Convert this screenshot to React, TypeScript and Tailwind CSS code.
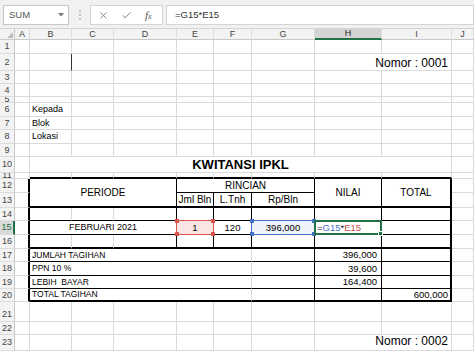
import type { ReactNode } from "react";
import { clsx } from "clsx";
import { X, Check } from "lucide-react";

// gridline + border classes
const GR = "border-r border-r-[#dadada]";
const GB = "border-b border-b-[#dadada]";
const KR = "border-r border-r-black";
const KR2 = "border-r-2 border-r-black";
const KB = "border-b border-b-black";
const KB2 = "border-b-2 border-b-black";

interface CellSpec {
  cls?: string;
  node?: ReactNode;
}

const blank = (extra?: string): CellSpec => ({ cls: clsx(GR, GB, extra) });
const blanks = (n: number): CellSpec[] => Array.from({ length: n }, () => blank());

const COLS = ["A", "B", "C", "D", "E", "F", "G", "H", "I", "J"];

function Corners({ cls }: { cls: string }) {
  return (
    <>
      <span className={clsx("absolute -left-[2px] -top-[2px] h-[4px] w-[4px]", cls)} />
      <span className={clsx("absolute -right-[2px] -top-[2px] h-[4px] w-[4px]", cls)} />
      <span className={clsx("absolute -left-[2px] -bottom-[2px] h-[4px] w-[4px]", cls)} />
      <span className={clsx("absolute -right-[2px] -bottom-[2px] h-[4px] w-[4px]", cls)} />
    </>
  );
}

const label = (text: string): CellSpec => ({
  cls: clsx(GR, GB, "items-center pl-[2px] text-[9px] whitespace-nowrap"),
  node: text,
});

const summary = (text: string, value: string, total: string, last: boolean): CellSpec[] => {
  const bb = last ? KB2 : KB;
  return [
    { cls: clsx(KR2, GB) },
    {
      cls: clsx("col-span-5 items-center pl-[2px] text-[8.5px] whitespace-pre", GR, bb),
      node: text,
    },
    { cls: clsx(KR, bb) },
    { cls: clsx(KR, bb, "items-center justify-end pr-[4px] text-[9.5px]"), node: value },
    { cls: clsx(KR2, bb, "items-center justify-end pr-[2px] text-[9.5px]"), node: total },
    blank(),
  ];
};

const ROWS: CellSpec[][] = [
  // 1
  blanks(10),
  // 2
  [
    blank(),
    { cls: clsx("border-r border-r-[#333]", GB) },
    ...blanks(5),
    {
      cls: clsx("col-span-2 items-end justify-end pr-[3px] pb-[1px] text-[12px] whitespace-nowrap", GR, GB),
      node: "Nomor : 0001",
    },
    blank(),
  ],
  // 3, 4, 5
  blanks(10),
  blanks(10),
  blanks(10),
  // 6, 7, 8
  [blank(), label("Kepada"), ...blanks(8)],
  [blank(), label("Blok"), ...blanks(8)],
  [blank(), label("Lokasi"), ...blanks(8)],
  // 9
  blanks(10),
  // 10
  [
    blank(),
    {
      cls: clsx("col-span-8 items-center justify-center font-bold text-[13px]", GR, GB),
      node: "KWITANSI IPKL",
    },
    blank(),
  ],
  // 11
  [blank(), ...Array.from({ length: 8 }, () => ({ cls: clsx(GR, KB2) })), blank()],
  // 12
  [
    { cls: clsx(KR2, GB) },
    {
      cls: clsx("col-span-3 row-span-2 items-center justify-center text-[10px]", KR, KB2),
      node: "PERIODE",
    },
    {
      cls: clsx("col-span-3 items-center justify-center text-[10px]", KR, KB),
      node: "RINCIAN",
    },
    { cls: clsx("row-span-2 items-center justify-center text-[10px]", KR, KB2), node: "NILAI" },
    { cls: clsx("row-span-2 items-center justify-center text-[10px]", KR2, KB2), node: "TOTAL" },
    blank(),
  ],
  // 13
  [
    { cls: clsx(KR2, GB) },
    { cls: clsx("items-center justify-center text-[10px] whitespace-nowrap", KR, KB2), node: "Jml Bln" },
    { cls: clsx("items-center justify-center text-[10px] whitespace-nowrap", KR, KB2), node: "L.Tnh" },
    { cls: clsx("items-center justify-center text-[10px] whitespace-nowrap", KR, KB2), node: "Rp/Bln" },
    blank(),
  ],
  // 14
  [
    { cls: clsx(KR2, GB) },
    { cls: clsx(GR, KB) },
    { cls: clsx(GR, KB) },
    { cls: clsx(KR, KB) },
    { cls: clsx(KR, KB) },
    { cls: clsx(KR, KB) },
    { cls: clsx(KR, KB) },
    { cls: clsx(KR, KB) },
    { cls: clsx(KR2, KB) },
    blank(),
  ],
  // 15
  [
    { cls: clsx(KR2, GB) },
    {
      cls: clsx("col-span-3 items-center justify-center text-[9px]", KR, KB),
      node: "FEBRUARI 2021",
    },
    {
      cls: clsx("items-center justify-center bg-[#fbe4e4] text-[9.5px]", KR, KB),
      node: (
        <>
          1
          <div className="pointer-events-none absolute -inset-px z-10 border border-[#d9534f]">
            <Corners cls="bg-[#d9534f]" />
          </div>
        </>
      ),
    },
    { cls: clsx("items-center justify-center text-[9.5px]", KR, KB), node: "120" },
    {
      cls: clsx("items-center justify-center bg-[#edf2fb] text-[9.5px]", KR, KB),
      node: (
        <>
          396,000
          <div className="pointer-events-none absolute -inset-px z-10 border border-[#4472c4]">
            <Corners cls="bg-[#4472c4]" />
          </div>
        </>
      ),
    },
    {
      cls: clsx("items-center pl-[2px] text-[9.5px] text-[#222] whitespace-nowrap", KR, KB),
      node: (
        <>
          =<span className="text-[#4472c4]">G15</span>*<span className="text-[#c0504d]">E15</span>
          <div className="pointer-events-none absolute -inset-px z-10 border-2 border-[#217346]">
            <span className="absolute -right-[3px] -bottom-[3px] h-[5px] w-[5px] border border-white bg-[#217346]" />
          </div>
        </>
      ),
    },
    { cls: clsx(KR2, KB) },
    blank(),
  ],
  // 16
  [
    { cls: clsx(KR2, GB) },
    { cls: clsx(GR, KB2) },
    { cls: clsx(GR, KB2) },
    { cls: clsx(KR, KB2) },
    { cls: clsx(KR, KB2) },
    { cls: clsx(KR, KB2) },
    { cls: clsx(KR, KB2) },
    { cls: clsx(KR, KB2) },
    { cls: clsx(KR2, KB2) },
    blank(),
  ],
  // 17 - 20
  summary("JUMLAH TAGIHAN", "396,000", "", false),
  summary("PPN 10 %", "39,600", "", false),
  summary("LEBIH  BAYAR", "164,400", "", false),
  summary("TOTAL TAGIHAN", "", "600,000", true),
  // 21, 22
  blanks(10),
  blanks(10),
  // 23
  [
    ...blanks(7),
    {
      cls: clsx("col-span-2 items-start justify-end pr-[3px] text-[12px] whitespace-nowrap", GR, GB),
      node: "Nomor : 0002",
    },
    blank(),
  ],
];

function FormulaBar() {
  return (
    <div className="flex h-[29px] items-start border-b border-b-[#d4d4d4] bg-[#f1f1f1] pt-[5px]">
      <div className="ml-[3px] flex h-[20px] w-[66px] items-center justify-between border border-[#c6c6c6] bg-white pl-[5px] pr-[4px] text-[9.5px] text-[#555]">
        <span>SUM</span>
        <svg width="6" height="4" viewBox="0 0 6 4">
          <path d="M0 0h6L3 3.5z" fill="#777" />
        </svg>
      </div>
      <div className="flex h-[20px] w-[21px] items-center justify-center">
        <svg width="2" height="10" viewBox="0 0 2 10">
          <rect x="0" y="0" width="2" height="2" fill="#c4c4c4" />
          <rect x="0" y="4" width="2" height="2" fill="#c4c4c4" />
          <rect x="0" y="8" width="2" height="2" fill="#c4c4c4" />
        </svg>
      </div>
      <div className="flex h-[20px] w-[73px] items-center border border-[#d4d4d4] bg-white pl-[7px] text-[#666]">
        <X size={11} strokeWidth={1.6} />
        <Check size={11} strokeWidth={1.8} className="ml-[12px]" />
        <span className="ml-[13px] font-['Liberation_Serif',serif] text-[11px] italic text-[#555]">
          f<span className="text-[8px]">x</span>
        </span>
      </div>
      <div className="ml-[3px] flex h-[20px] flex-1 items-center border border-[#d4d4d4] bg-white pl-[8px] text-[9.5px] text-[#333]">
        =G15*E15
      </div>
    </div>
  );
}

export default function App() {
  const rowHeader = (n: number) => {
    const active = n === 15;
    return (
      <div
        key={`rh${n}`}
        className={clsx(
          "flex justify-center overflow-hidden border-b border-b-[#dcdcdc] text-[9px] leading-none",
          n === 21 ? "items-end pb-[2px]" : "items-center",
          active
            ? "border-r-2 border-r-[#217346] bg-[#d9d9d9] text-[#217346]"
            : "border-r border-r-[#c8c8c8] bg-[#f3f3f3] text-[#444]",
        )}
      >
        {n}
      </div>
    );
  };

  return (
    <div className="h-[351px] w-[474px] overflow-hidden bg-white font-['Liberation_Sans',Arial,sans-serif] text-black">
      <FormulaBar />
      <div className="grid grid-cols-[15px_15px_42px_42px_63px_37px_38px_63px_67px_70px_22px] grid-rows-[11px_14px_17px_13px_13px_6px_14px_13px_14px_13px_16px_6px_14px_15px_13px_14px_14px_13px_14px_13px_13px_20px_13px_16px]">
        {/* column headers */}
        <div className="relative border-r border-r-[#c8c8c8] border-b border-b-[#c8c8c8] bg-[#f3f3f3]">
          <svg className="absolute bottom-[1px] right-[1px]" width="6" height="6" viewBox="0 0 6 6">
            <path d="M6 0v6H0z" fill="#bdbdbd" />
          </svg>
        </div>
        {COLS.map((c) => (
          <div
            key={c}
            className={clsx(
              "flex items-center justify-center border-r border-r-[#dcdcdc] text-[9px] leading-none",
              c === "H"
                ? "border-b-2 border-b-[#217346] bg-[#d4d4d4] text-[#222]"
                : "border-b border-b-[#c8c8c8] bg-[#f3f3f3] text-[#444]",
            )}
          >
            {c}
          </div>
        ))}

        {/* body */}
        {ROWS.map((cells, i) => [
          rowHeader(i + 1),
          ...cells.map((cell, j) => (
            <div key={`c${i}-${j}`} className={clsx("relative flex min-w-0 leading-none", cell.cls)}>
              {cell.node}
            </div>
          )),
        ])}
      </div>
    </div>
  );
}
